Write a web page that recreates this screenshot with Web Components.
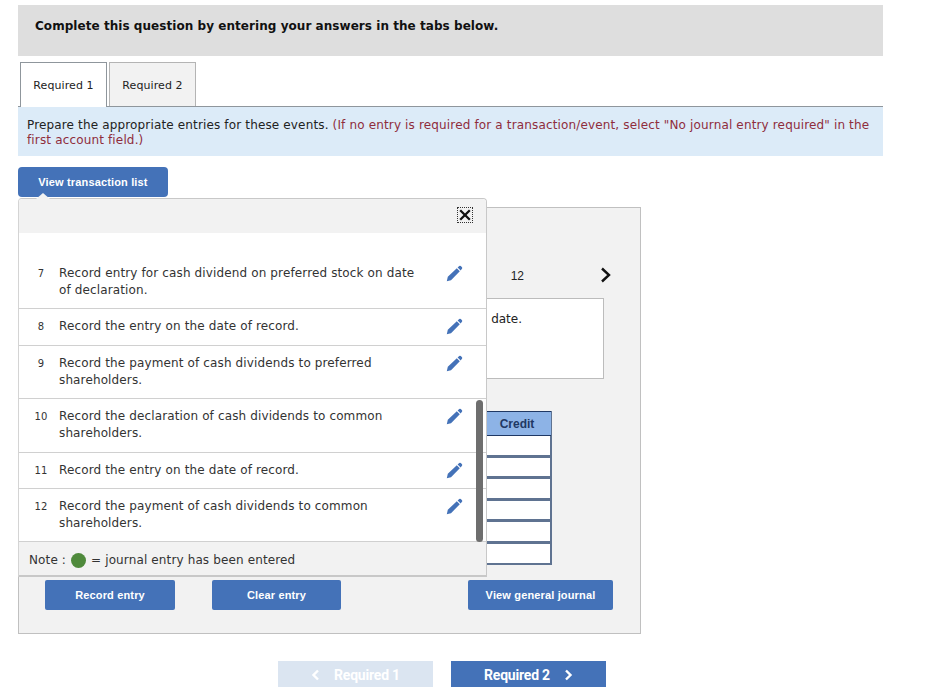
<!DOCTYPE html>
<html>
<head>
<meta charset="utf-8">
<title>Required 1</title>
<style>
html, body { margin: 0; height: 687px; overflow: hidden; background: #fff; }
body { font-family: "DejaVu Sans", Verdana, sans-serif; font-size: 12px; color: #222; }
</style>
</head>
<body>
<q-page>
  <q-banner>Complete this question by entering your answers in the tabs below.</q-banner>
  <q-tabs></q-tabs>
  <q-instruction></q-instruction>
  <q-workspace>
    <q-button slot="toggle" width="150" radius="tl">View transaction list</q-button>
    <q-entry-panel slot="panel"></q-entry-panel>
    <q-transaction-list slot="overlay">
      <q-transaction num="7">Record entry for cash dividend on preferred stock on date of declaration.</q-transaction>
      <q-transaction num="8">Record the entry on the date of record.</q-transaction>
      <q-transaction num="9">Record the payment of cash dividends to preferred shareholders.</q-transaction>
      <q-transaction num="10">Record the declaration of cash dividends to common shareholders.</q-transaction>
      <q-transaction num="11">Record the entry on the date of record.</q-transaction>
      <q-transaction num="12">Record the payment of cash dividends to common shareholders.</q-transaction>
    </q-transaction-list>
  </q-workspace>
  <q-pager></q-pager>
</q-page>

<script>
'use strict';

(function() {

const CHEVRON_LEFT = `<svg width="9" height="12" viewBox="0 0 9 12"><path d="M7 1.5 L2.5 6 L7 10.5" fill="none" stroke="currentColor" stroke-width="2.4"/></svg>`;
const CHEVRON_RIGHT = `<svg width="9" height="12" viewBox="0 0 9 12"><path d="M2 1.5 L6.5 6 L2 10.5" fill="none" stroke="currentColor" stroke-width="2.4"/></svg>`;

class QPage extends HTMLElement {
  constructor() {
    super();
    const root = this.attachShadow({mode: 'open'});
    root.innerHTML = `
<style>
:host { display: block; width: 865px; margin: 5px 0 0 18px; }
</style>
<slot></slot>`;
  }
}

class QBanner extends HTMLElement {
  constructor() {
    super();
    const root = this.attachShadow({mode: 'open'});
    root.innerHTML = `
<style>
:host {
  display: block;
  box-sizing: border-box;
  height: 51px;
  padding: 13px 0 0 17px;
  background: #dedede;
  color: #111;
  font-size: 12px;
  font-weight: bold;
  letter-spacing: 0.05px;
  line-height: 16px;
}
</style>
<slot></slot>`;
  }
}

class QTabs extends HTMLElement {
  constructor() {
    super();
    const root = this.attachShadow({mode: 'open'});
    root.innerHTML = `
<style>
:host {
  display: flex;
  gap: 2px;
  box-sizing: border-box;
  height: 45px;
  margin-top: 6px;
  padding-left: 2px;
  border-bottom: 1px solid #8f969c;
}
.tab {
  box-sizing: border-box;
  width: 87px;
  height: 44px;
  border: 1px solid #b4b4b4;
  border-bottom: 0;
  background: #f2f2f2;
  font-size: 11px;
  letter-spacing: 0.1px;
  line-height: 46px;
  text-align: center;
}
.tab.on { height: 45px; background: #fff; border-left-color: #8f969c; border-top-color: #8f969c; border-right-color: #8f969c; }
</style>
<div class="tab on">Required 1</div>
<div class="tab">Required 2</div>`;
  }
}

class QInstruction extends HTMLElement {
  constructor() {
    super();
    const root = this.attachShadow({mode: 'open'});
    root.innerHTML = `
<style>
:host {
  display: block;
  box-sizing: border-box;
  height: 49px;
  padding: 11px 5px 0 9px;
  background: #dcebf8;
  font-size: 12px;
  letter-spacing: 0.15px;
  line-height: 15px;
  color: #222;
}
.note { color: #8f2d3c; }
</style>
Prepare the appropriate entries for these events. <span class="note">(If no entry is required for a transaction/event, select "No journal entry required" in the first account field.)</span>`;
  }
}

class QButton extends HTMLElement {
  constructor() {
    super();
    const root = this.attachShadow({mode: 'open'});
    root.innerHTML = `
<style>
:host {
  display: block;
  box-sizing: border-box;
  height: 30px;
  background: #4472b8;
  border-radius: 2px;
  color: #fff;
  font: bold 11px/31px "Liberation Sans", Arial, sans-serif;
  letter-spacing: 0.15px;
  text-align: center;
}
</style>
<slot></slot>`;
    this.style.width = this.getAttribute('width') + 'px';
    if (this.getAttribute('radius') === 'tl') {
      this.style.borderRadius = '4px';
    }
  }
}

class QWorkspace extends HTMLElement {
  constructor() {
    super();
    const root = this.attachShadow({mode: 'open'});
    root.innerHTML = `
<style>
:host { display: block; position: relative; margin-top: 11px; }
.panel { display: block; margin-top: 10px; }
.overlay { position: absolute; left: 0; top: 31px; }
</style>
<slot name="toggle"></slot>
<div class="panel"><slot name="panel"></slot></div>
<div class="overlay"><slot name="overlay"></slot></div>`;
  }
}

class QEntryPanel extends HTMLElement {
  constructor() {
    super();
    const root = this.attachShadow({mode: 'open'});
    root.innerHTML = `
<style>
:host {
  display: flex;
  flex-direction: column;
  box-sizing: border-box;
  width: 623px;
  height: 427px;
  padding-top: 54px;
  background: #f2f2f2;
  border: 1px solid #c0c0c0;
}
.steps {
  display: flex;
  justify-content: flex-end;
  align-items: center;
  height: 26px;
  padding-right: 28px;
  font: 12px/14px "Liberation Sans", Arial, sans-serif;
  color: #222;
}
.steps span { padding-top: 2px; }
.steps svg { color: #111; margin-left: 76px; width: 12px; height: 16px; }
.desc {
  display: flex;
  justify-content: flex-end;
  box-sizing: border-box;
  height: 81px;
  margin: 10px 36px 0 30px;
  padding: 12px 81px 0 0;
  background: #fff;
  border: 1px solid #bcbcbc;
  line-height: 17px;
}
.grid {
  align-self: flex-end;
  box-sizing: border-box;
  width: 70px;
  height: 154px;
  margin: 32px 88px 0 0;
  border-right: 2px solid #5f7391;
  border-bottom: 2px solid #5f7391;
}
.head {
  box-sizing: border-box;
  height: 25px;
  background: #8db3e6;
  border: 1px solid #1f3864;
  border-right: 0;
  margin-right: -1px;
  color: #1f3864;
  font: bold 12px/24px "Liberation Sans", Arial, sans-serif;
  text-align: center;
}
.cell { box-sizing: border-box; height: 21.5px; background: #fff; border-bottom: 3px solid #5f7391; }
.cell:last-child { border-bottom: 0; height: 19.5px; }
.actions {
  display: flex;
  gap: 37px;
  margin-top: 15px;
  padding: 0 27px 0 26px;
}
.actions .end { margin-left: auto; }
</style>
<div class="steps"><span>12</span><svg viewBox="0 0 12 16"><path d="M2 1.5 L9 8 L2 14.5" fill="none" stroke="currentColor" stroke-width="2.4"/></svg></div>
<div class="desc">date.</div>
<div class="grid">
  <div class="head">Credit</div>
  <div class="cell"></div><div class="cell"></div><div class="cell"></div>
  <div class="cell"></div><div class="cell"></div><div class="cell"></div>
</div>
<div class="actions">
  <q-button width="130">Record entry</q-button>
  <q-button width="129">Clear entry</q-button>
  <q-button width="145" class="end">View general journal</q-button>
</div>`;
  }
}

class QTransactionList extends HTMLElement {
  constructor() {
    super();
    const root = this.attachShadow({mode: 'open'});
    root.innerHTML = `
<style>
:host {
  display: block;
  position: relative;
  box-sizing: border-box;
  width: 469px;
  height: 379px;
  background: #fff;
  border: 1px solid #c8c8c8;
  border-left-color: #d4d4d4;
  border-radius: 4px 4px 0 0;
}
:host::before {
  content: '';
  position: absolute;
  left: 17px;
  top: -6px;
  border: 7px solid transparent;
  border-top: 0;
  border-bottom: 6px solid #f2f2f2;
}
.top {
  display: flex;
  justify-content: flex-end;
  align-items: center;
  box-sizing: border-box;
  height: 34px;
  padding: 0 13px 3px 0;
  background: #f2f2f2;
  border-radius: 4px 4px 0 0;
}
.close {
  display: block;
  width: 16px;
  height: 16px;
  outline: 1px dotted #333;
  outline-offset: -1px;
}
.list { position: relative; padding: 23px 0 0; height: 308px; box-sizing: border-box; }
.thumb {
  position: absolute;
  right: 3px;
  top: 167px;
  width: 7px;
  height: 142px;
  background: #6e6e6e;
  border-radius: 4px;
}
.foot {
  box-sizing: border-box;
  height: 35px;
  padding: 2px 0 0 10px;
  background: #f2f2f2;
  border-top: 1px solid #d0d0d0;
  border-bottom: 1px solid #c8c8c8;
  display: flex;
  align-items: center;
  color: #333;
  letter-spacing: 0.13px;
}
.dot { width: 15px; height: 15px; margin: 1px 5px 0 5px; border-radius: 50%; background: #4f8a3c; }
</style>
<div class="top">
  <svg class="close" viewBox="0 0 16 16"><path d="M3.2 3.2 L12.8 12.8 M12.8 3.2 L3.2 12.8" stroke="#111" stroke-width="2.3" fill="none"/></svg>
</div>
<div class="list">
  <slot></slot>
  <div class="thumb"></div>
</div>
<div class="foot">Note :<span class="dot"></span>= journal entry has been entered</div>`;
  }
}

class QTransaction extends HTMLElement {
  constructor() {
    super();
    const root = this.attachShadow({mode: 'open'});
    root.innerHTML = `
<style>
:host {
  display: flex;
  align-items: flex-start;
  box-sizing: border-box;
  padding: 9px 0 9.4px;
  border-bottom: 1px solid #d0d0d0;
  line-height: 17px;
  color: #333;
  letter-spacing: 0.13px;
}
:host(:last-of-type) { border-bottom: 0; }
.num { flex: none; width: 24px; margin: 1px 6px 0 10px; text-align: center; font-size: 10px; line-height: 16px; }
.txt { flex: none; width: 366px; }
svg { flex: none; margin: 0 0 0 21px; }
</style>
<div class="num"></div>
<div class="txt"><slot></slot></div>
<svg width="17" height="17" viewBox="0 0 17 17"><path fill="#4472b8" d="M0.8 16.2 L1.8 11.8 L10.8 3.2 L13.8 6.2 L5 15.2 Z M11.6 2.4 L13.2 1 Q14 0.5 14.8 1 L16 2.2 Q16.5 3 16 3.8 L14.6 5.4 Z"/></svg>`;
    root.querySelector('.num').textContent = this.getAttribute('num');
  }
}

class QPager extends HTMLElement {
  constructor() {
    super();
    const root = this.attachShadow({mode: 'open'});
    root.innerHTML = `
<style>
:host { display: flex; gap: 18px; margin: 27px 0 0 260px; }
.btn {
  display: flex;
  align-items: center;
  justify-content: center;
  gap: 14px;
  box-sizing: border-box;
  width: 155px;
  height: 30px;
  padding-bottom: 2px;
  background: #4472b8;
  color: #fff;
  font: bold 14px "Roboto", Arial, sans-serif;
  letter-spacing: -0.2px;
}
.btn.off { background: #dbe5f1; }
</style>
<div class="btn off">${CHEVRON_LEFT}<span>Required 1</span></div>
<div class="btn"><span>Required 2</span>${CHEVRON_RIGHT}</div>`;
  }
}

customElements.define('q-page', QPage);
customElements.define('q-banner', QBanner);
customElements.define('q-tabs', QTabs);
customElements.define('q-instruction', QInstruction);
customElements.define('q-button', QButton);
customElements.define('q-workspace', QWorkspace);
customElements.define('q-entry-panel', QEntryPanel);
customElements.define('q-transaction-list', QTransactionList);
customElements.define('q-transaction', QTransaction);
customElements.define('q-pager', QPager);

}());
</script>
</body>
</html>
